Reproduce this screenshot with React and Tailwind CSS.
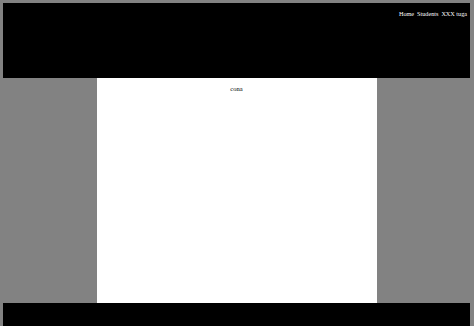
import React from 'react';

const links = ['Home', 'Students', 'XXX tuga'];

const App = () => {
   return (
      <div
         className="h-[326px] w-[474px] overflow-hidden bg-[#828282] pt-[3px] pl-[3px] pr-[4px]"
         style={{ fontFamily: '"Liberation Serif", "Times New Roman", serif' }}
      >
         <header className="h-[75px] bg-black flex justify-end items-start pt-[8px] pr-[2px]">
            <nav className="flex gap-[1px] text-[6.2px] leading-none text-white">
               {links.map((l) => (
                  <a key={l} href="#" className="px-[1px]">
                     {l}
                  </a>
               ))}
            </nav>
         </header>
         <main className="mx-auto h-[225px] w-[280px] bg-white pt-[8px] text-center text-[6.5px] leading-none text-black">
            cona
         </main>
         <footer className="h-[40px] bg-black"></footer>
      </div>
   );
};

export default App;
